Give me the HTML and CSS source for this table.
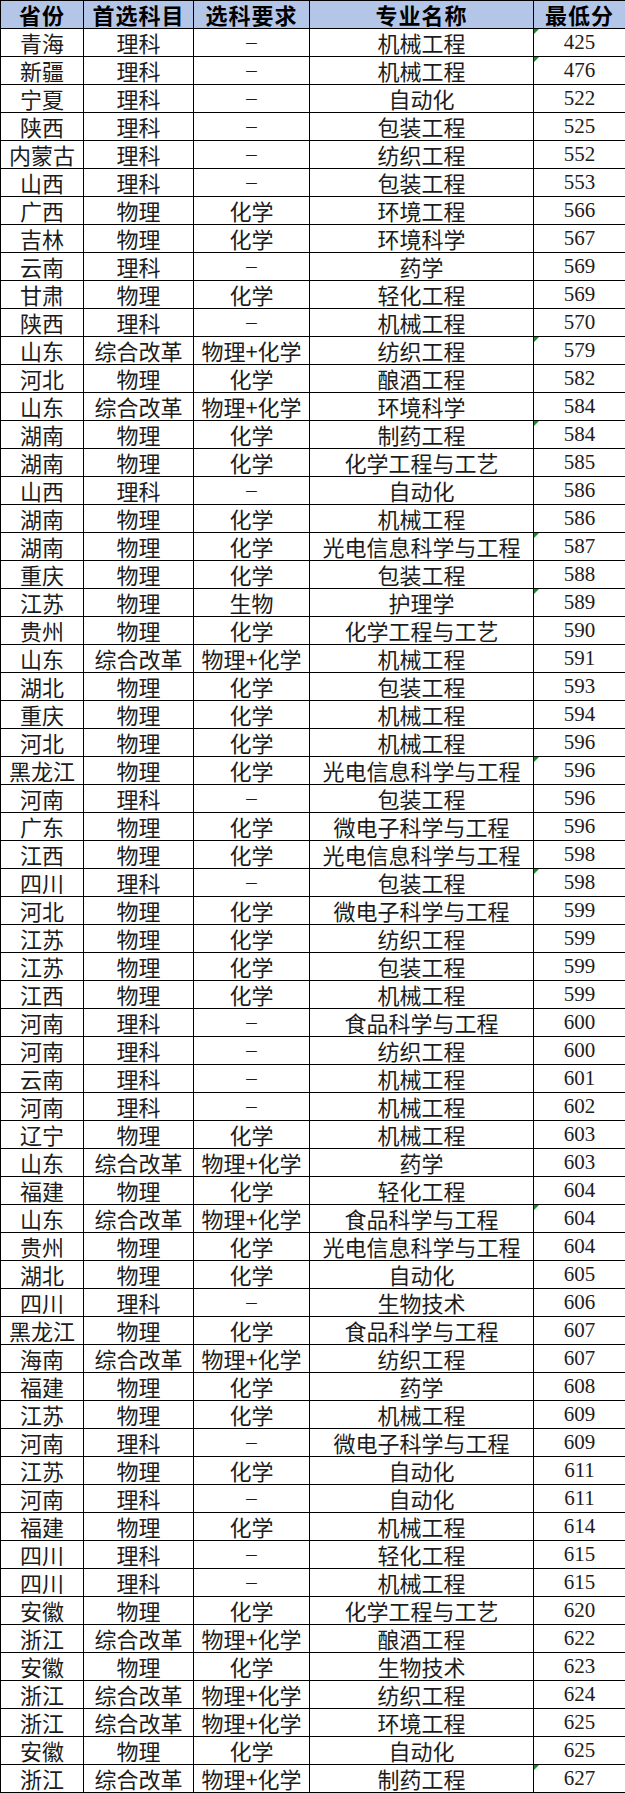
FILE: index.html
```html
<!DOCTYPE html>
<html lang="zh">
<head>
<meta charset="utf-8">
<title>录取最低分</title>
<link rel="stylesheet" href="styles.css">
</head>
<body>
<table class="sheet">
<colgroup>
<col class="c-prov"><col class="c-first"><col class="c-req"><col class="c-major"><col class="c-score">
</colgroup>
<thead>
<tr><th>省份</th><th>首选科目</th><th>选科要求</th><th>专业名称</th><th>最低分</th></tr>
</thead>
<tbody id="rows"></tbody>
</table>
<script src="app.js"></script>
</body>
</html>
```

FILE: styles.css
```css
html, body {
  margin: 0;
  padding: 0;
  background: #ffffff;
}
.sheet {
  border-collapse: collapse;
  table-layout: fixed;
  width: 625px;
  font-family: "Noto Sans CJK SC", "Liberation Serif", sans-serif;
  font-size: 22px;
  color: #1c1c1c;
}
.c-prov { width: 83px; }
.c-first { width: 110px; }
.c-req { width: 116px; }
.c-major { width: 224px; }
.c-score { width: 92px; }
.sheet th,
.sheet td {
  border: 1px solid #000;
  height: 27px;
  padding: 0;
  text-align: center;
  vertical-align: middle;
  line-height: 27px;
  white-space: nowrap;
}
.sheet th {
  background: #b4c6e7;
  font-weight: bold;
  color: #000;
  letter-spacing: 1px;
}
.sheet td.score,
.sheet td.dash {
  font-family: "Liberation Serif", serif;
  font-size: 21px;
}
.sheet td.score {
  position: relative;
}
.sheet td.flag::before {
  content: "";
  position: absolute;
  left: 0;
  top: 0;
  border-top: 5px solid #1e8a2e;
  border-right: 5px solid transparent;
}
```

FILE: app.js
```js
const data = [
["青海","理科","–","机械工程","425",1],
["新疆","理科","–","机械工程","476",1],
["宁夏","理科","–","自动化","522",0],
["陕西","理科","–","包装工程","525",0],
["内蒙古","理科","–","纺织工程","552",0],
["山西","理科","–","包装工程","553",0],
["广西","物理","化学","环境工程","566",0],
["吉林","物理","化学","环境科学","567",0],
["云南","理科","–","药学","569",0],
["甘肃","物理","化学","轻化工程","569",0],
["陕西","理科","–","机械工程","570",0],
["山东","综合改革","物理+化学","纺织工程","579",1],
["河北","物理","化学","酿酒工程","582",0],
["山东","综合改革","物理+化学","环境科学","584",0],
["湖南","物理","化学","制药工程","584",1],
["湖南","物理","化学","化学工程与工艺","585",0],
["山西","理科","–","自动化","586",0],
["湖南","物理","化学","机械工程","586",0],
["湖南","物理","化学","光电信息科学与工程","587",1],
["重庆","物理","化学","包装工程","588",0],
["江苏","物理","生物","护理学","589",1],
["贵州","物理","化学","化学工程与工艺","590",0],
["山东","综合改革","物理+化学","机械工程","591",0],
["湖北","物理","化学","包装工程","593",0],
["重庆","物理","化学","机械工程","594",0],
["河北","物理","化学","机械工程","596",0],
["黑龙江","物理","化学","光电信息科学与工程","596",1],
["河南","理科","–","包装工程","596",0],
["广东","物理","化学","微电子科学与工程","596",0],
["江西","物理","化学","光电信息科学与工程","598",0],
["四川","理科","–","包装工程","598",1],
["河北","物理","化学","微电子科学与工程","599",0],
["江苏","物理","化学","纺织工程","599",0],
["江苏","物理","化学","包装工程","599",0],
["江西","物理","化学","机械工程","599",0],
["河南","理科","–","食品科学与工程","600",0],
["河南","理科","–","纺织工程","600",0],
["云南","理科","–","机械工程","601",0],
["河南","理科","–","机械工程","602",0],
["辽宁","物理","化学","机械工程","603",0],
["山东","综合改革","物理+化学","药学","603",0],
["福建","物理","化学","轻化工程","604",0],
["山东","综合改革","物理+化学","食品科学与工程","604",1],
["贵州","物理","化学","光电信息科学与工程","604",0],
["湖北","物理","化学","自动化","605",0],
["四川","理科","–","生物技术","606",0],
["黑龙江","物理","化学","食品科学与工程","607",0],
["海南","综合改革","物理+化学","纺织工程","607",0],
["福建","物理","化学","药学","608",0],
["江苏","物理","化学","机械工程","609",0],
["河南","理科","–","微电子科学与工程","609",0],
["江苏","物理","化学","自动化","611",0],
["河南","理科","–","自动化","611",0],
["福建","物理","化学","机械工程","614",0],
["四川","理科","–","轻化工程","615",0],
["四川","理科","–","机械工程","615",0],
["安徽","物理","化学","化学工程与工艺","620",0],
["浙江","综合改革","物理+化学","酿酒工程","622",0],
["安徽","物理","化学","生物技术","623",0],
["浙江","综合改革","物理+化学","纺织工程","624",0],
["浙江","综合改革","物理+化学","环境工程","625",0],
["安徽","物理","化学","自动化","625",0],
["浙江","综合改革","物理+化学","制药工程","627",1]
];
const tbody = document.getElementById("rows");
for (const r of data) {
  const tr = document.createElement("tr");
  for (let i = 0; i < 5; i++) {
    const td = document.createElement("td");
    td.textContent = r[i];
    if (i === 2 && r[i] === "–") td.className = "dash";
    if (i === 4) td.className = r[5] ? "score flag" : "score";
    tr.appendChild(td);
  }
  tbody.appendChild(tr);
}
```
